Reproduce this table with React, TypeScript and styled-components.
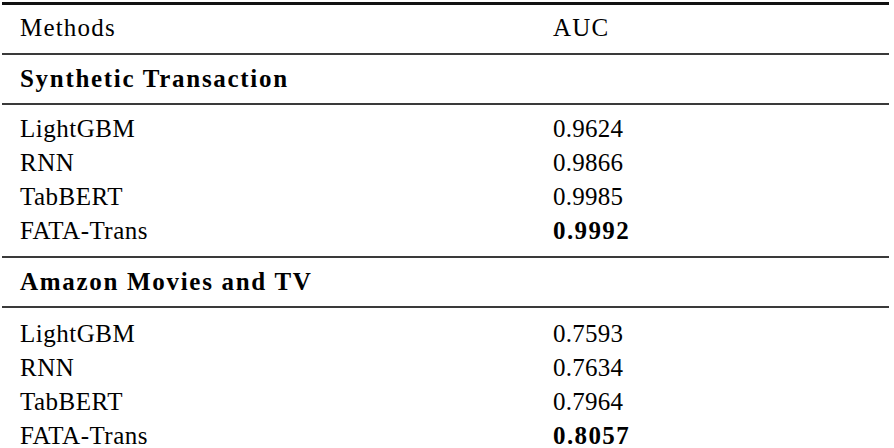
import React from 'react';
import styled, { createGlobalStyle } from 'styled-components';

interface Result {
  method: string;
  auc: string;
  best?: boolean;
}

interface Dataset {
  name: string;
  results: Result[];
}

const datasets: Dataset[] = [
  {
    name: 'Synthetic Transaction',
    results: [
      { method: 'LightGBM', auc: '0.9624' },
      { method: 'RNN', auc: '0.9866' },
      { method: 'TabBERT', auc: '0.9985' },
      { method: 'FATA-Trans', auc: '0.9992', best: true },
    ],
  },
  {
    name: 'Amazon Movies and TV',
    results: [
      { method: 'LightGBM', auc: '0.7593' },
      { method: 'RNN', auc: '0.7634' },
      { method: 'TabBERT', auc: '0.7964' },
      { method: 'FATA-Trans', auc: '0.8057', best: true },
    ],
  },
];

const GlobalStyle = createGlobalStyle`
  body {
    margin: 0;
    background: #fff;
    color: #000;
    font-family: "Liberation Serif", "Times New Roman", serif;
  }
`;

const Page = styled.div`
  padding: 2px 0 0 2px;
  width: 887px;
`;

const Table = styled.div`
  border-top: 3px solid #111;
`;

const Row = styled.div`
  display: grid;
  grid-template-columns: 533px 1fr;
  padding-left: 18px;
  height: 34px;
  font-size: 25px;
  line-height: 34px;
  white-space: nowrap;
`;

const Block = styled.div<{ $top: number; $bottom: number }>`
  padding: ${(p) => p.$top}px 0 ${(p) => p.$bottom}px;
  border-bottom: 2px solid #3a3a3a;
`;

const Method = styled.span`
  letter-spacing: 0.5px;
`;

const Score = styled.span<{ $best?: boolean }>`
  font-weight: ${(p) => (p.$best ? 700 : 400)};
  letter-spacing: ${(p) => (p.$best ? '1.4px' : '0.25px')};
`;

const SectionTitle = styled.span`
  font-weight: 700;
  letter-spacing: 1.7px;
`;

const HeadText = styled.span`
  letter-spacing: 1.2px;
`;

export default function App() {
  return (
    <>
      <GlobalStyle />
      <Page>
        <Table>
          <Block $top={6} $bottom={8}>
            <Row>
              <HeadText>Methods</HeadText>
              <HeadText>AUC</HeadText>
            </Row>
          </Block>
          {datasets.map((d, i) => (
            <React.Fragment key={d.name}>
              <Block $top={7} $bottom={7}>
                <Row>
                  <SectionTitle>{d.name}</SectionTitle>
                </Row>
              </Block>
              <Block $top={i === 0 ? 7 : 9} $bottom={8}>
                {d.results.map((r) => (
                  <Row key={r.method}>
                    <Method>{r.method}</Method>
                    <Score $best={r.best}>{r.auc}</Score>
                  </Row>
                ))}
              </Block>
            </React.Fragment>
          ))}
        </Table>
      </Page>
    </>
  );
}
